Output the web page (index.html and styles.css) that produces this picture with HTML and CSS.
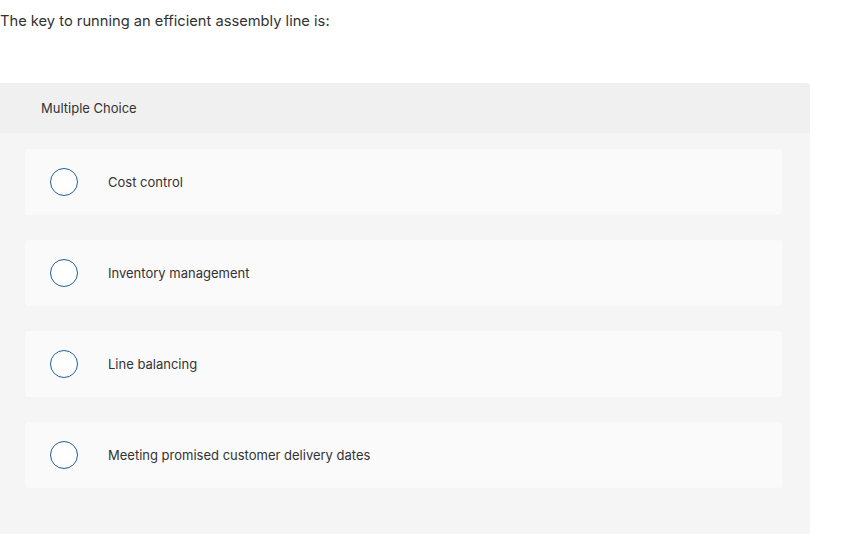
FILE: index.html
```html
<!DOCTYPE html>
<html>
<head>
<meta charset="utf-8">
<link rel="stylesheet" href="styles.css">
</head>
<body>
<p class="question">The key to running an efficient assembly line is:</p>
<div class="panel">
  <div class="panel-head">Multiple Choice</div>
  <div class="options">
    <div class="option"><span class="radio"></span><span class="label">Cost control</span></div>
    <div class="option"><span class="radio"></span><span class="label">Inventory management</span></div>
    <div class="option"><span class="radio"></span><span class="label">Line balancing</span></div>
    <div class="option"><span class="radio"></span><span class="label">Meeting promised customer delivery dates</span></div>
  </div>
</div>
</body>
</html>
```
FILE: styles.css
```css
html, body { margin: 0; padding: 0; background: #fff; }
body { font-family: "Inter", "Lato", sans-serif; color: #333; width: 841px; height: 534px; overflow: hidden; }
.question { margin: 0; padding-top: 11px; font-size: 14.7px; line-height: 20px; color: #333; }
.panel { margin-top: 52px; width: 810px; background: #f5f5f5; border-top-right-radius: 4px; padding-bottom: 46px; }
.panel-head { height: 50px; background: #f0f0f0; border-top-right-radius: 4px; padding-left: 41px; display: flex; align-items: center; font-size: 13px; color: #333; }
.options { display: flex; flex-direction: column; gap: 25px; padding: 16px 28px 0 25px; }
.option { height: 66px; background: #fafafa; border-radius: 4px; display: flex; align-items: center; padding-left: 25px; }
.radio { width: 26px; height: 26px; border: 1.3px solid #1f5f99; border-radius: 50%; background: #fff; flex: none; }
.label { margin-left: 30px; font-size: 13px; color: #333; }
```
